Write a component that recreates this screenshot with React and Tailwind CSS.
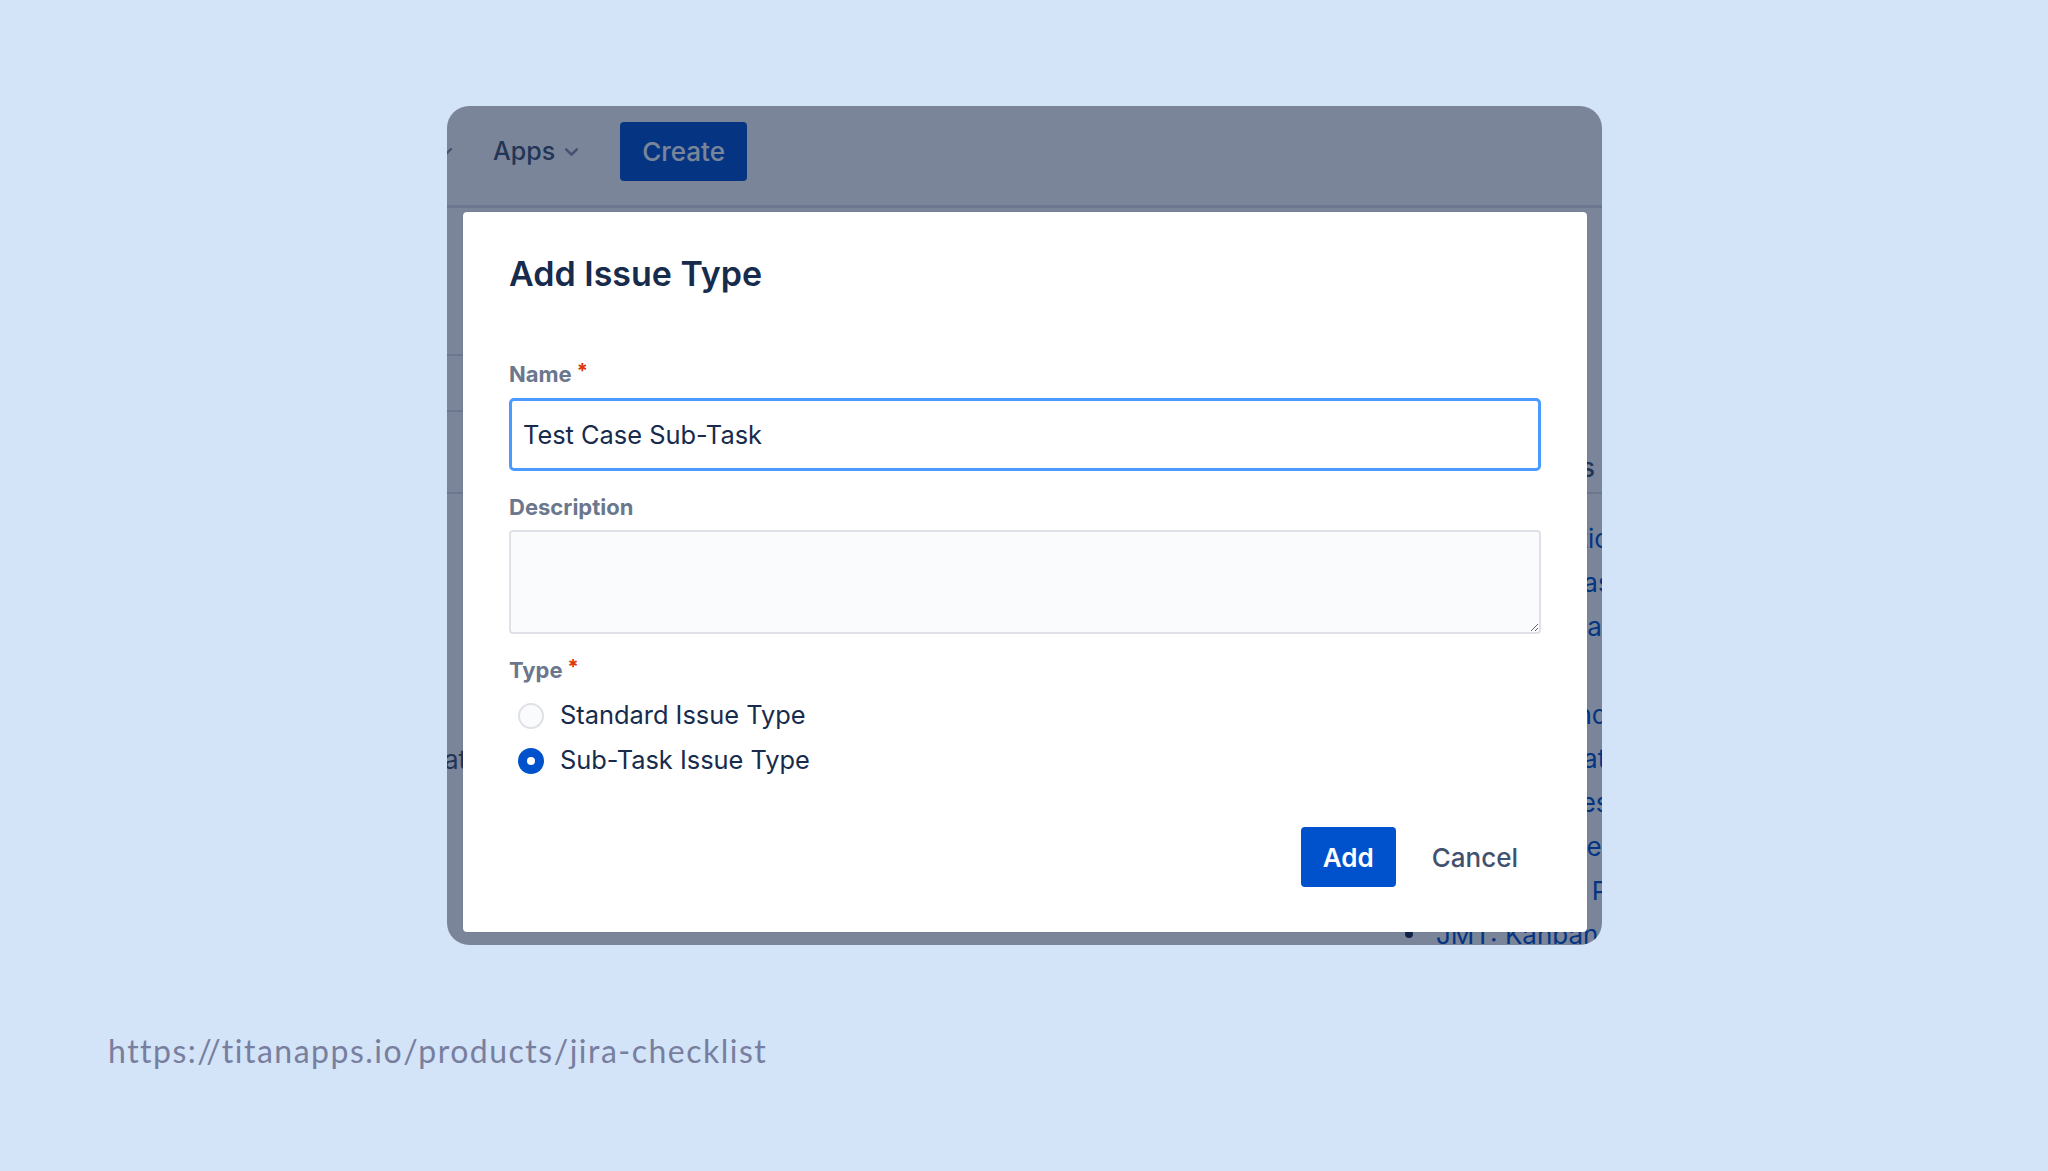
import React from 'react';

// small chevron used in the top nav
const Chevron = ({ className }) => (
  <svg viewBox="0 0 14 9" className={className} fill="none" stroke="currentColor" strokeWidth="2.4" strokeLinecap="round" strokeLinejoin="round">
    <path d="M2 2l5 5 5-5" />
  </svg>
);

const listItems = [
  'JMT: Execution',
  'JMT: Test Case',
  'JMT: Test Plan - ',
  'JMT: Bug',
  'JMT: Precondition',
  'JMT: Test Data',
  'JMT: Test Results',
  'JMT: Release - ',
  'JMT: Scrum Plan',
  'JMT: Kanban',
];

const Radio = ({ checked, label }) => (
  <label className="flex items-center h-[45px]">
    {checked ? (
      <span className="ml-[9px] w-[26px] h-[26px] rounded-full bg-[#0052cc] flex items-center justify-center">
        <span className="w-[8px] h-[8px] rounded-full bg-white" />
      </span>
    ) : (
      <span className="ml-[9px] w-[26px] h-[26px] rounded-full border-2 border-[#dfe1e6] bg-[#fafbfc]" />
    )}
    <span className="ml-[16px] text-[25.4px] text-[#172b4d]">{label}</span>
  </label>
);

const Label = ({ children, required }) => (
  <div className="flex items-start text-[22px] leading-[26px] font-bold text-[#6b778c]">
    {children}
    {required && <span className="ml-[5px] text-[20px] leading-[20px] text-[#de350b]">*</span>}
  </div>
);

export default function App() {
  return (
    <div className="min-h-screen w-full bg-[#d3e3f8] pt-[106px] pl-[108px] font-['Inter',sans-serif]">
      {/* Screenshot card: Jira page with the modal open */}
      <div className="relative ml-[339px] w-[1155px] h-[839px] rounded-[22px] overflow-hidden bg-white">
        <header className="flex items-center h-[102px] pb-[8px] border-b-[3px] border-[#dfe1e6]">
          <Chevron className="-ml-[8px] w-[14px] h-[9px] text-[#8993a4]" />
          <div className="ml-[40px] flex items-center gap-[9px] text-[25px] font-medium text-[#42526e]">
            Apps
            <Chevron className="w-[15px] h-[10px] text-[#8993a4]" />
          </div>
          <button className="ml-[41px] w-[127px] h-[59px] rounded-[4px] bg-[#0052cc] text-white text-[26px] font-medium">
            Create
          </button>
        </header>

        <div className="flex">
          <aside className="w-[260px] text-[26px] text-[#42526e]">
            <div className="h-[148px] border-b-2 border-[#dfe1e6]" />
            <div className="h-[56px] border-b-2 border-[#dfe1e6]" />
            <div className="h-[82px] border-b-2 border-[#dfe1e6]" />
            <div className="mt-[243px] h-[44px] flex items-center -ml-[66px] whitespace-nowrap">Format</div>
          </aside>
          <main className="flex-1 flex justify-end">
            <div className="w-[250px]">
              <div className="h-[286px] flex items-end justify-end pr-[7px] pb-[2px] border-b-2 border-[#dfe1e6]">
                <span className="leading-[44px] text-[26px] font-medium text-[#42526e] whitespace-nowrap">Issue types</span>
              </div>
              <ul className="pt-[22px] pl-[53px]">
                {listItems.map((item) => (
                  <li key={item} className="h-[44px] flex items-center whitespace-nowrap">
                    <span className="w-[8px] h-[8px] rounded-full bg-[#172b4d] shrink-0" />
                    <span className="ml-[23px] text-[26px] text-[#0052cc]">{item}</span>
                  </li>
                ))}
              </ul>
            </div>
          </main>
        </div>

        {/* blanket */}
        <div className="absolute inset-0 bg-[rgba(9,30,66,0.54)]" />

        {/* dialog */}
        <div className="absolute left-[16px] top-[106px] w-[1124px] h-[720px] bg-white rounded-[4px] px-[46px] pt-[41px] shadow-[0_0_1px_rgba(9,30,66,0.31)]">
          <h2 className="text-[34px] leading-[42px] font-semibold text-[#172b4d]">Add Issue Type</h2>

          <div className="mt-[66px]">
            <Label required>Name</Label>
          </div>
          <input
            readOnly
            value="Test Case Sub-Task"
            className="mt-[11px] block w-full h-[73px] border-[3px] border-[#4c9aff] rounded-[5px] px-[11px] text-[25.4px] text-[#172b4d] bg-white outline-none"
          />

          <div className="mt-[23px]">
            <Label>Description</Label>
          </div>
          <textarea
            readOnly
            className="mt-[10px] block w-full h-[104px] border-2 border-[#dfe1e6] rounded-[4px] bg-[#fafbfc] outline-none"
          />

          <div className="mt-[23px]">
            <Label required>Type</Label>
          </div>
          <div className="mt-[10px]">
            <Radio label="Standard Issue Type" />
            <Radio checked label="Sub-Task Issue Type" />
          </div>

          <div className="mt-[44px] flex justify-end gap-[13px]">
            <button className="h-[60px] px-[22px] rounded-[4px] bg-[#0052cc] text-white text-[26px] font-semibold">Add</button>
            <button className="h-[60px] px-[23px] rounded-[4px] text-[#42526e] text-[26px] font-medium">Cancel</button>
          </div>
        </div>
      </div>

      <p className="mt-[86px] text-[32px] leading-[40px] tracking-[1.5px] text-[#787f9e] font-['Lato',sans-serif]">
        https://titanapps.io/products/jira-checklist
      </p>
    </div>
  );
}
